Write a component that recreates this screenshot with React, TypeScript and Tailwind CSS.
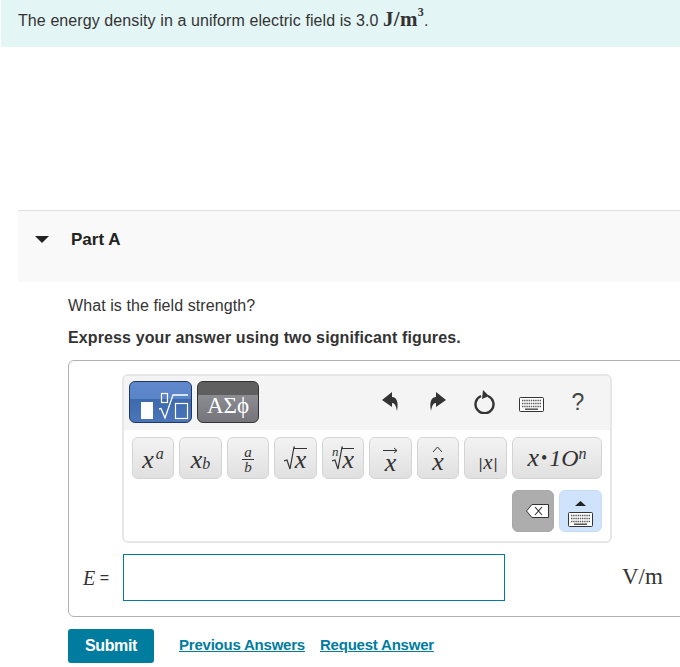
import React from 'react';

const serif = "font-['Liberation_Serif',serif]";

function KeyButton({ w = 'w-[42px]', children }: { w?: string; children: React.ReactNode }) {
  return (
    <div className={`${w} h-[42px] shrink-0 rounded-md border border-[#d4d4d4] bg-linear-to-b from-[#f3f3f3] to-[#e0e0e0] flex items-center justify-center text-[#333] ${serif} italic`}>
      {children}
    </div>
  );
}

function Keyboard({ w = 25, h = 15 }: { w?: number; h?: number }) {
  return (
    <svg width={w} height={h} viewBox="0 0 25 15">
      <rect x="0.5" y="0.5" width="24" height="14" rx="1" fill="#fff" stroke="#333" />
      <path d="M3 3.5h19M3 6.5h19" stroke="#555" strokeWidth="1.6" strokeDasharray="1.4 0.8" />
      <path d="M3 9.5h19" stroke="#555" strokeWidth="1.6" strokeDasharray="1.4 0.8" />
      <path d="M6 12.2h13" stroke="#444" strokeWidth="1.4" />
    </svg>
  );
}

function Radical() {
  return (
    <svg width="11" height="25" viewBox="0 0 11 25" className="mt-[1px] -mr-[1px]">
      <path d="M0 15l3-1 3 9 4-22h1" fill="none" stroke="#333" strokeWidth="1.2" />
    </svg>
  );
}

export default function App() {
  return (
    <div className="w-[680px] h-[667px] overflow-hidden bg-white font-['Liberation_Sans',sans-serif] text-[#333]">
      <div className="ml-px h-[47px] bg-[#e4f5f5] pl-[17px] pt-[7px] text-[16px] leading-[24px] tracking-[0.09px] flex items-baseline whitespace-pre">
        <span>The energy density in a uniform electric field is 3.0 </span>
        <span className={`${serif} text-[21px] font-bold tracking-[0.3px]`}>J/m</span>
        <span className={`${serif} text-[12px] font-bold relative -top-[10px]`}>3</span>
        <span>.</span>
      </div>

      <div className="ml-[18px] mt-[163px] h-[72px] border-t border-[#e0e0e0] bg-[#f9f9f9] flex items-start pt-[18px]">
        <svg width="14" height="7" viewBox="0 0 14 7" className="ml-[17px] mt-[7px]">
          <path d="M0 0h14L7 7z" fill="#222" />
        </svg>
        <span className="ml-[22px] text-[17px] leading-[22px] font-bold text-[#222]">Part A</span>
      </div>

      <div className="pl-[68px]">
        <p className="mt-[14px] text-[16px] leading-[20px] tracking-[0.08px]">What is the field strength?</p>
        <p className="mt-[12px] text-[16px] leading-[20px] font-bold tracking-[0.12px]">Express your answer using two significant figures.</p>

        <div className="mt-[12px] w-[640px] h-[257px] rounded-l-md border border-[#b0b0b0] pt-[13px] pl-[53px]">
          <div className="w-[490px] h-[169px] rounded-md border-2 border-[#e6e6e6] flex flex-col">
            <div className="h-[54px] bg-[#f4f4f4] flex items-start pt-[5px] pl-[5px] rounded-t">
              <div className="w-[63px] h-[42px] rounded-md border border-[#22375f] bg-[linear-gradient(#6089cc_0,#5a84c8_42%,#3d69ad_42%,#4a76b9_100%)]">
                <svg width="61" height="40" viewBox="0 0 61 40">
                  <rect x="11" y="20" width="12" height="17" fill="#fff" />
                  <rect x="31.500" y="11.500" width="6" height="9" fill="none" stroke="#fff" strokeWidth="1.2" />
                  <path d="M29 27l2-.5 4 9.500 8-23h15" fill="none" stroke="#fff" strokeWidth="1.3" />
                  <rect x="45.500" y="21.500" width="12" height="15" fill="none" stroke="#fff" strokeWidth="1.2" />
                </svg>
              </div>
              <div className={`ml-[5px] w-[62px] h-[42px] rounded-md border border-[#333] bg-[linear-gradient(#5f5f5f_0,#5f5f5f_33%,#8c8c93_33%,#74747a_100%)] text-white text-[23px] flex items-center justify-center pt-[9px] ${serif}`}>
                ΑΣϕ
              </div>
              <div className="ml-[118px] w-[26px] h-[42px] flex items-center justify-center">
                <svg width="17" height="20" viewBox="0 0 17 20"><path d="M0 8L10 0v5c4 0 7 4 5 14-1-5-2-8-5-8v4z" fill="#333" /></svg>
              </div>
              <div className="ml-[21px] w-[26px] h-[42px] flex items-center justify-center">
                <svg width="17" height="20" viewBox="0 0 17 20"><path d="M17 8L7 0v5C3 5 0 9 2 19c1-5 2-8 5-8v4z" fill="#333" /></svg>
              </div>
              <div className="ml-[22px] w-[26px] h-[42px] flex items-center justify-center">
                <svg width="22" height="24" viewBox="0 0 22 24"><path d="M7 6a9 9 0 1 0 7 0" fill="none" stroke="#333" strokeWidth="2.4" /><path d="M9 0l6 6-7 3z" fill="#333" /></svg>
              </div>
              <div className="ml-[20px] w-[26px] h-[42px] flex items-center justify-center pt-[5px]">
                <Keyboard />
              </div>
              <div className="ml-[21px] w-[26px] h-[42px] flex items-center justify-center text-[23px] text-[#444]">?</div>
            </div>

            <div className="pl-[8px] pt-[7px] flex gap-[5px]">
              <KeyButton>
                <span className="text-[26px] leading-none mt-[3px]">x</span>
                <span className="text-[16px] leading-none -mt-[9px] ml-[2px]">a</span>
              </KeyButton>
              <KeyButton w="w-[43px]">
                <span className="text-[26px] leading-none mt-[3px]">x</span>
                <span className="text-[16px] leading-none mt-[12px]">b</span>
              </KeyButton>
              <KeyButton>
                <span className="flex flex-col items-center text-[15px] leading-[14px] mt-[3px]">
                  <span className="border-b border-[#333] px-[2px]">a</span>
                  <span>b</span>
                </span>
              </KeyButton>
              <KeyButton w="w-[43px]">
                <Radical />
                <span className="text-[26px] leading-[22px] mt-[3px] border-t border-[#333] px-[1px]">x</span>
              </KeyButton>
              <KeyButton>
                <span className="text-[13px] leading-none -mt-[14px] -mr-[6px]">n</span>
                <Radical />
                <span className="text-[26px] leading-[22px] mt-[3px] border-t border-[#333]">x</span>
              </KeyButton>
              <KeyButton w="w-[43px]">
                <span className="flex flex-col items-center">
                  <svg width="15" height="7" viewBox="0 0 15 7" className="mt-[2px]"><path d="M0 3.500h14M11 1l3 2.500-3 2.500" fill="none" stroke="#333" /></svg>
                  <span className="text-[26px] leading-[18px]">x</span>
                </span>
              </KeyButton>
              <KeyButton>
                <span className="flex flex-col items-center">
                  <svg width="11" height="7" viewBox="0 0 11 7" className="mt-[1px]"><path d="M1 6l4.500-5 4.500 5" fill="none" stroke="#333" /></svg>
                  <span className="text-[26px] leading-[18px]">x</span>
                </span>
              </KeyButton>
              <KeyButton w="w-[43px]">
                <span className="text-[14px] leading-none mt-[12px] not-italic font-['Liberation_Sans',sans-serif] ml-[5px]">|</span>
                <span className="text-[21px] leading-none mt-[9px] mx-[1px]">x</span>
                <span className="text-[14px] leading-none mt-[12px] not-italic font-['Liberation_Sans',sans-serif]">|</span>
              </KeyButton>
              <KeyButton w="w-[90px]">
                <span className="text-[26px] leading-none">x</span>
                <span className="text-[18px] leading-none not-italic mx-[2px]">•</span>
                <span className="text-[24px] leading-none">1O</span>
                <span className="text-[16px] leading-none -mt-[9px]">n</span>
              </KeyButton>
            </div>

            <div className="pl-[388px] pt-[11px] flex gap-[5px]">
              <div className="w-[42px] h-[42px] rounded-md border border-[#a8a8a8] bg-[#adadad] flex items-center justify-center">
                <svg width="23" height="14" viewBox="0 0 23 14" className="ml-[8px]">
                  <path d="M6 .5h16.500v13H6L.5 7z" fill="#fff" stroke="#333" />
                  <path d="M9 3l7 8M16 3l-7 8" stroke="#333" strokeWidth="1.1" />
                </svg>
              </div>
              <div className="w-[43px] h-[42px] rounded-md border border-[#c4dcf5] bg-[#cfe4fc] flex flex-col items-center justify-end pb-[4px]">
                <svg width="11" height="5" viewBox="0 0 11 5" className="mb-[6px]"><path d="M0 5L5.500 0 11 5z" fill="#222" /></svg>
                <Keyboard />
              </div>
            </div>
          </div>

          <div className="mt-[11px] flex">
            <div className="w-[54px] h-[47px] -ml-[53px] pl-[14px] flex items-center justify-start text-[#333] whitespace-pre">
              <span className={`${serif} italic text-[20px]`}>E</span>
              <span className="text-[16px]"> =</span>
            </div>
            <div className="w-[382px] h-[47px] border border-[#007c9e] bg-white"></div>
            <div className={`ml-[117px] h-[47px] flex items-center ${serif} text-[23px]`}>V/m</div>
          </div>
        </div>

        <div className="mt-[12px] flex items-center">
          <div className="w-[86px] h-[34px] rounded-[3px] bg-[#007c9e] text-white text-[16px] font-bold tracking-[-0.4px] flex items-center justify-center">Submit</div>
          <a className="ml-[25px] -mt-[2px] text-[#007c9e] text-[15px] font-bold tracking-[-0.22px] underline">Previous Answers</a>
          <a className="ml-[15px] -mt-[2px] text-[#007c9e] text-[15px] font-bold tracking-[-0.22px] underline">Request Answer</a>
        </div>
      </div>
    </div>
  );
}
